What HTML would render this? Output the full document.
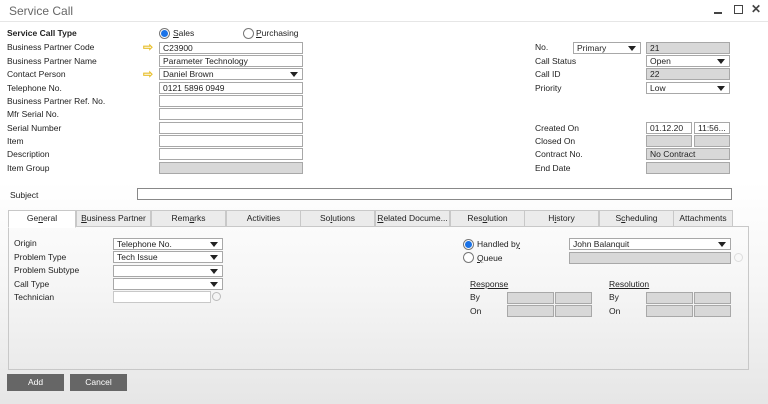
<!DOCTYPE html>
<html><head><meta charset="utf-8"><style>
*{box-sizing:border-box;margin:0;padding:0}
body{width:768px;height:404px;overflow:hidden;font-family:"Liberation Sans",Tahoma,sans-serif;font-size:8.5px;color:#222;background:linear-gradient(#fff 0%,#fff 45%,#f6f6f6 70%,#e6e6e6 100%);position:relative}
.a{position:absolute;white-space:nowrap}
.l{position:absolute;line-height:10px}
.f{position:absolute;height:12px;border:1px solid #a8a8a8;background:#fff;padding-left:3px;line-height:10px;overflow:hidden}
.g{background:#d8d8d8}
.dd:after{content:"";position:absolute;right:4px;top:3px;border-left:4px solid transparent;border-right:4px solid transparent;border-top:5px solid #222}
.r{position:absolute;width:11px;height:11px;border-radius:50%;border:1px solid #777;background:#fff}
.r.on:after{content:"";position:absolute;left:1px;top:1px;width:7px;height:7px;border-radius:50%;background:#1a73e8}
.arr{position:absolute;color:#e8c030;font-size:12px;line-height:10px;font-weight:bold}
.tab{position:absolute;top:210px;height:17px;border:1px solid #c8c8c8;background:#ebebeb;text-align:center;line-height:15px}
.btn{position:absolute;top:374px;height:17px;background:#666;color:#fff;text-align:center;line-height:17px}
</style></head><body>
<div class="a" style="left:9px;top:4px;font-size:12px;color:#666">Service Call</div>
<div class="a" style="left:714px;top:12px;width:8px;height:2px;background:#444"></div>
<div class="a" style="left:734px;top:5px;width:9px;height:9px;border:1.5px solid #444"></div>
<div class="a" style="left:751px;top:2px;font-size:12px;color:#444;font-weight:bold">✕</div>
<div class="a" style="left:0;top:21px;width:768px;height:1px;background:#e6e6e6"></div>

<div class="l" style="left:7px;top:28px;font-weight:bold">Service Call Type</div>
<div class="l" style="left:7px;top:42px">Business Partner Code</div>
<div class="l" style="left:7px;top:56px">Business Partner Name</div>
<div class="l" style="left:7px;top:69px">Contact Person</div>
<div class="l" style="left:7px;top:83px">Telephone No.</div>
<div class="l" style="left:7px;top:96px">Business Partner Ref. No.</div>
<div class="l" style="left:7px;top:109px">Mfr Serial No.</div>
<div class="l" style="left:7px;top:123px">Serial Number</div>
<div class="l" style="left:7px;top:136px">Item</div>
<div class="l" style="left:7px;top:149px">Description</div>
<div class="l" style="left:7px;top:163px">Item Group</div>

<div class="r on" style="left:159px;top:28px"></div><div class="l" style="left:173px;top:28px"><u>S</u>ales</div>
<div class="r" style="left:243px;top:28px"></div><div class="l" style="left:256px;top:28px"><u>P</u>urchasing</div>
<div class="arr" style="left:143px;top:42px">⇨</div>
<div class="arr" style="left:143px;top:69px">⇨</div>
<div class="f" style="left:159px;top:42px;width:144px">C23900</div>
<div class="f" style="left:159px;top:55px;width:144px">Parameter Technology</div>
<div class="f dd" style="left:159px;top:68px;width:144px">Daniel Brown</div>
<div class="f" style="left:159px;top:82px;width:144px">0121 5896 0949</div>
<div class="f" style="left:159px;top:95px;width:144px"></div>
<div class="f" style="left:159px;top:108px;width:144px"></div>
<div class="f" style="left:159px;top:122px;width:144px"></div>
<div class="f" style="left:159px;top:135px;width:144px"></div>
<div class="f" style="left:159px;top:148px;width:144px"></div>
<div class="f g" style="left:159px;top:162px;width:144px"></div>

<div class="l" style="left:535px;top:42px">No.</div>
<div class="l" style="left:535px;top:56px">Call Status</div>
<div class="l" style="left:535px;top:69px">Call ID</div>
<div class="l" style="left:535px;top:83px">Priority</div>
<div class="l" style="left:535px;top:123px">Created On</div>
<div class="l" style="left:535px;top:136px">Closed On</div>
<div class="l" style="left:535px;top:149px">Contract No.</div>
<div class="l" style="left:535px;top:163px">End Date</div>
<div class="f dd" style="left:573px;top:42px;width:68px">Primary</div>
<div class="f g" style="left:646px;top:42px;width:84px">21</div>
<div class="f dd" style="left:646px;top:55px;width:84px">Open</div>
<div class="f g" style="left:646px;top:68px;width:84px">22</div>
<div class="f dd" style="left:646px;top:82px;width:84px">Low</div>
<div class="f" style="left:646px;top:122px;width:46px">01.12.20</div>
<div class="f" style="left:694px;top:122px;width:36px">11:56...</div>
<div class="f g" style="left:646px;top:135px;width:46px"></div>
<div class="f g" style="left:694px;top:135px;width:36px"></div>
<div class="f g" style="left:646px;top:148px;width:84px">No Contract</div>
<div class="f g" style="left:646px;top:162px;width:84px"></div>

<div class="l" style="left:10px;top:190px">Subject</div>
<div class="f" style="left:137px;top:188px;width:595px;border-color:#888"></div>

<div class="a" style="left:8px;top:226px;width:741px;height:144px;border:1px solid #c8c8c8"></div>
<div class="tab" style="left:8px;width:68px;background:#fff;border-bottom-color:#fff;height:18px">Ge<u>n</u>eral</div>
<div class="tab" style="left:76px;width:75px"><u>B</u>usiness Partner</div>
<div class="tab" style="left:151px;width:75px">Rem<u>a</u>rks</div>
<div class="tab" style="left:226px;width:75px">Activities</div>
<div class="tab" style="left:300px;width:75px">So<u>l</u>utions</div>
<div class="tab" style="left:375px;width:75px"><u>R</u>elated Docume...</div>
<div class="tab" style="left:450px;width:75px">Res<u>o</u>lution</div>
<div class="tab" style="left:524px;width:75px">H<u>i</u>story</div>
<div class="tab" style="left:599px;width:75px">S<u>c</u>heduling</div>
<div class="tab" style="left:673px;width:60px">Attachments</div>

<div class="l" style="left:14px;top:238px">Origin</div>
<div class="l" style="left:14px;top:252px">Problem Type</div>
<div class="l" style="left:14px;top:265px">Problem Subtype</div>
<div class="l" style="left:14px;top:279px">Call Type</div>
<div class="l" style="left:14px;top:292px">Technician</div>
<div class="f dd" style="left:113px;top:238px;width:110px">Telephone No.</div>
<div class="f dd" style="left:113px;top:251px;width:110px">Tech Issue</div>
<div class="f dd" style="left:113px;top:265px;width:110px"></div>
<div class="f dd" style="left:113px;top:278px;width:110px"></div>
<div class="f" style="left:113px;top:291px;width:98px;border-color:#c8c8c8"></div>
<div class="a" style="left:212px;top:292px;width:9px;height:9px;border-radius:50%;border:1px solid #bbb"></div>

<div class="r on" style="left:463px;top:239px"></div><div class="l" style="left:477px;top:239px">Handled b<u>y</u></div>
<div class="r" style="left:463px;top:252px"></div><div class="l" style="left:477px;top:253px"><u>Q</u>ueue</div>
<div class="f dd" style="left:569px;top:238px;width:162px">John Balanquit</div>
<div class="f g" style="left:569px;top:252px;width:162px"></div>
<div class="a" style="left:734px;top:253px;width:9px;height:9px;border-radius:50%;border:1px solid #ddd"></div>

<div class="l" style="left:470px;top:279px"><u>Response</u></div>
<div class="l" style="left:470px;top:292px">By</div>
<div class="l" style="left:470px;top:306px">On</div>
<div class="f g" style="left:507px;top:292px;width:47px"></div>
<div class="f g" style="left:555px;top:292px;width:37px"></div>
<div class="f g" style="left:507px;top:305px;width:47px"></div>
<div class="f g" style="left:555px;top:305px;width:37px"></div>
<div class="l" style="left:609px;top:279px"><u>Resolution</u></div>
<div class="l" style="left:609px;top:292px">By</div>
<div class="l" style="left:609px;top:306px">On</div>
<div class="f g" style="left:646px;top:292px;width:47px"></div>
<div class="f g" style="left:694px;top:292px;width:37px"></div>
<div class="f g" style="left:646px;top:305px;width:47px"></div>
<div class="f g" style="left:694px;top:305px;width:37px"></div>

<div class="btn" style="left:7px;width:57px">Add</div>
<div class="btn" style="left:70px;width:57px">Cancel</div>
</body></html>
